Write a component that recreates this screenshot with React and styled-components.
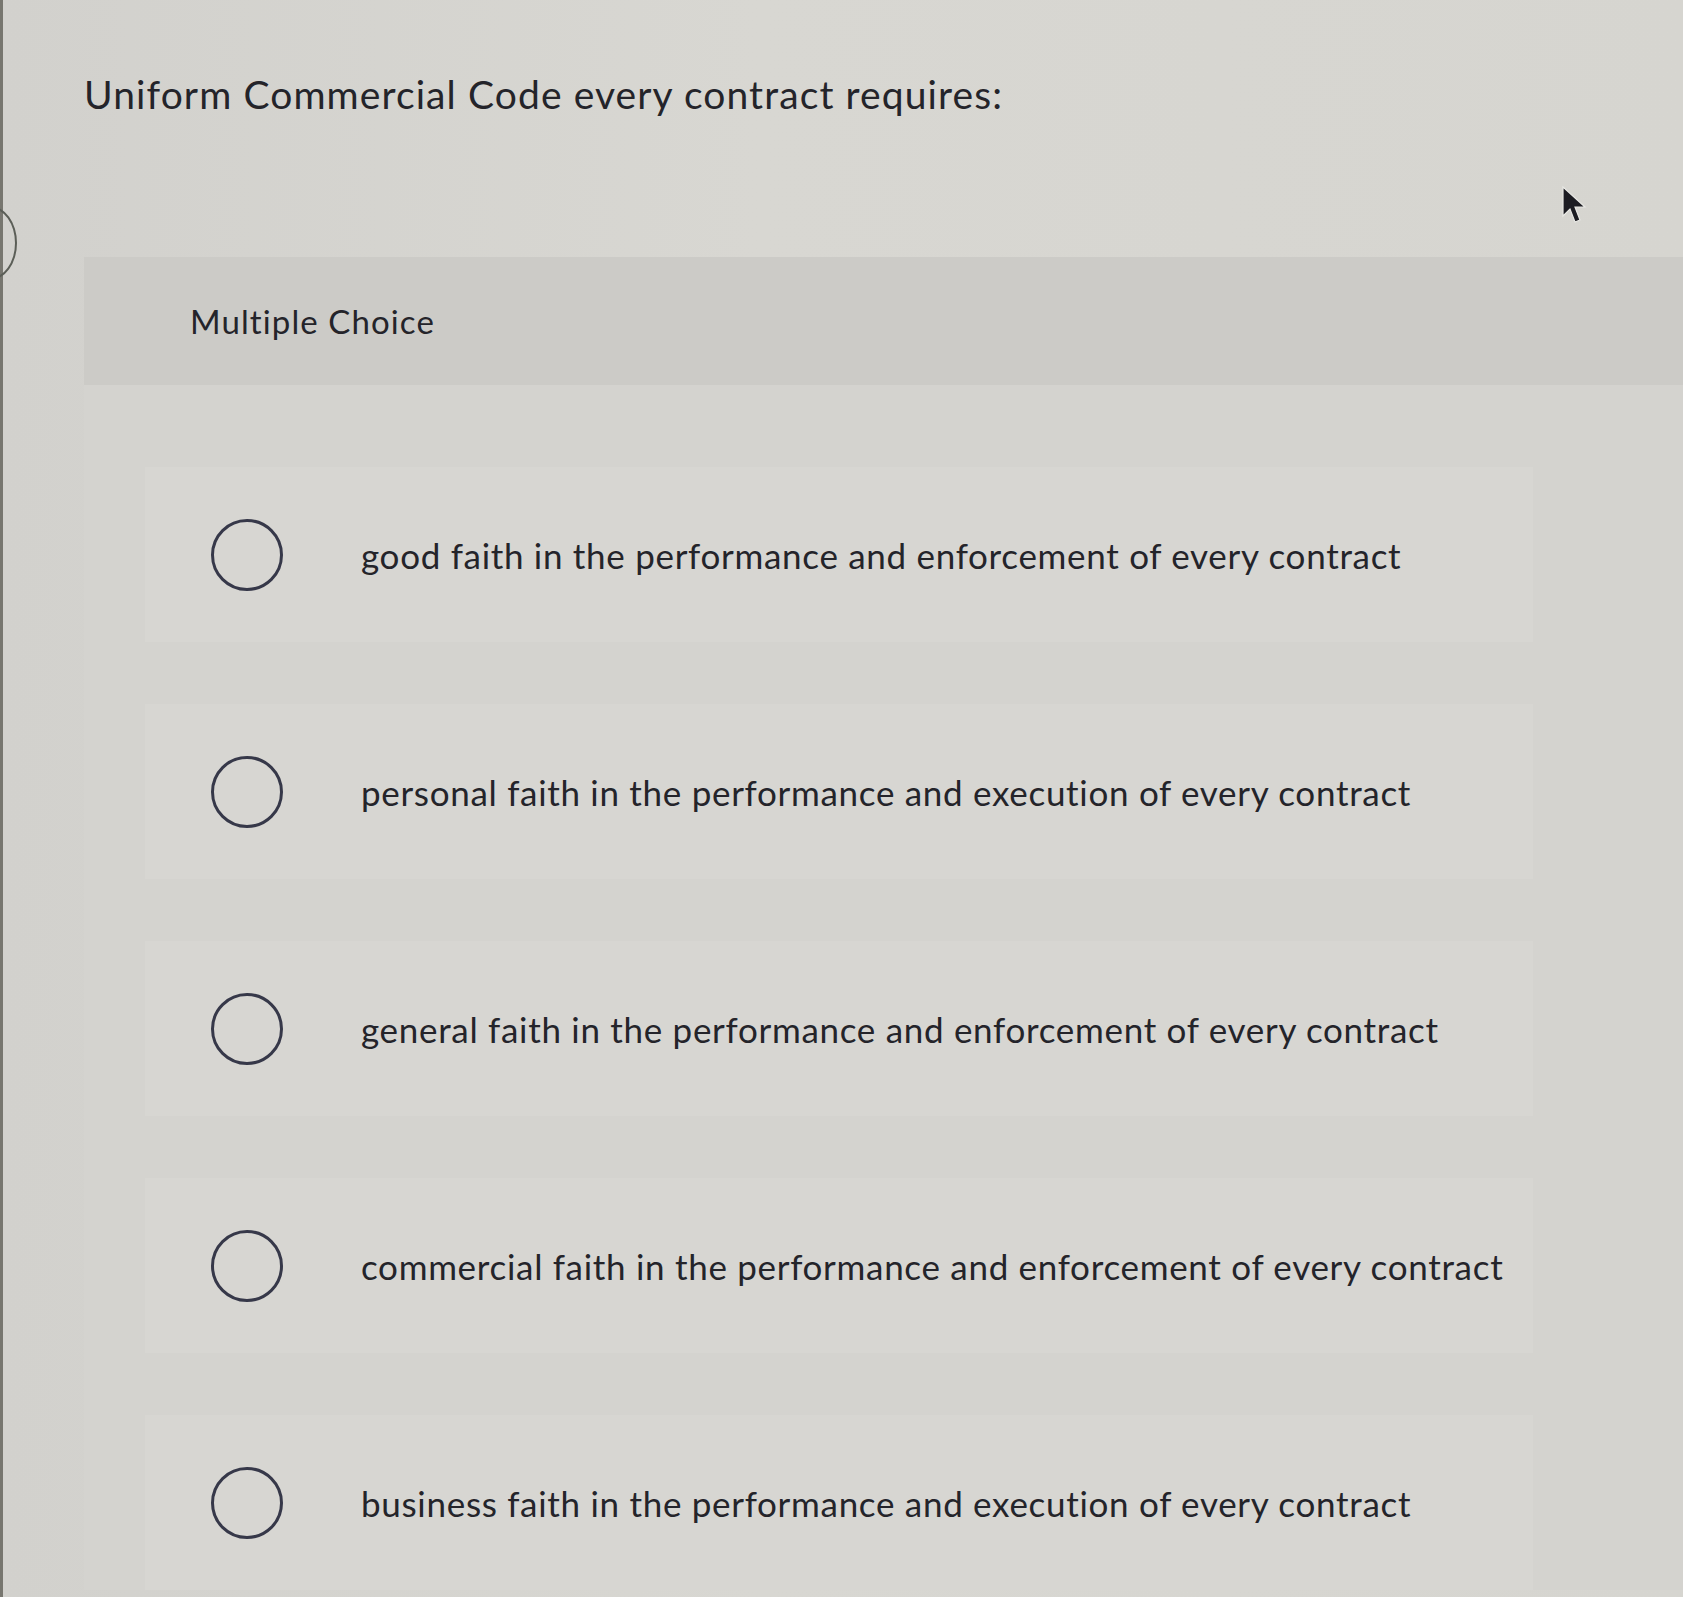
import React from "react";
import styled, { createGlobalStyle } from "styled-components";

const Global = createGlobalStyle`
  html, body { margin: 0; padding: 0; }
  body {
    background: #d6d5d0;
    font-family: Lato, "Open Sans", "Liberation Sans", sans-serif;
    color: #24242a;
    width: 1683px;
    height: 1597px;
    overflow: hidden;
  }
`;

const Screen = styled.div`
  position: relative;
  width: 1683px;
  height: 1597px;
  box-sizing: border-box;
  border-left: 3px solid #77766f;
  background: linear-gradient(90deg, #d2d1cd 0%, #d8d7d2 45%, #d6d5d0 100%);
  padding: 58px 0 0 81px;
`;

const EdgeTab = styled.div`
  position: absolute;
  left: -40px;
  top: 206px;
  width: 50px;
  height: 70px;
  border: 2px solid #5b5e57;
  border-radius: 50%;
`;

const Cursor = styled.svg`
  position: absolute;
  left: 1558px;
  top: 186px;
`;

const Title = styled.h1`
  margin: 0;
  font-size: 39px;
  font-weight: 400;
  line-height: 72px;
  letter-spacing: 1.1px;
`;

const Panel = styled.section`
  margin-top: 127px;
  background: #d4d3cf;
`;

const PanelHeader = styled.div`
  height: 128px;
  display: flex;
  align-items: center;
  padding-left: 106px;
  background: #cccbc7;
  font-size: 33px;
  letter-spacing: 1.1px;
`;

const OptionList = styled.div`
  display: flex;
  flex-direction: column;
  gap: 62px;
  padding: 82px 150px 0 61px;
`;

const OptionCard = styled.label`
  display: flex;
  align-items: center;
  height: 175px;
  padding-left: 66px;
  background: #d7d6d2;
  cursor: pointer;
`;

const Radio = styled.span`
  flex: none;
  width: 66px;
  height: 66px;
  border: 3px solid #363849;
  border-radius: 50%;
`;

const OptionText = styled.span`
  margin-left: 78px;
  font-size: 35px;
  letter-spacing: 0.7px;
`;

const options = [
  "good faith in the performance and enforcement of every contract",
  "personal faith in the performance and execution of every contract",
  "general faith in the performance and enforcement of every contract",
  "commercial faith in the performance and enforcement of every contract",
  "business faith in the performance and execution of every contract",
];

export default function App() {
  return (
    <>
      <Global />
      <Screen>
        <EdgeTab />
        <Cursor width="26" height="42" viewBox="0 0 26 42">
          <path d="M2 1 L2 30 L9 23 L14 36 L19 34 L14 21 L24 21 Z" fill="#1c1c22" stroke="#e8e8e4" strokeWidth="1.2" />
        </Cursor>
        <Title>Uniform Commercial Code every contract requires:</Title>
        <Panel>
          <PanelHeader>Multiple Choice</PanelHeader>
          <OptionList>
            {options.map((o) => (
              <OptionCard key={o}>
                <Radio />
                <OptionText>{o}</OptionText>
              </OptionCard>
            ))}
          </OptionList>
        </Panel>
      </Screen>
    </>
  );
}
